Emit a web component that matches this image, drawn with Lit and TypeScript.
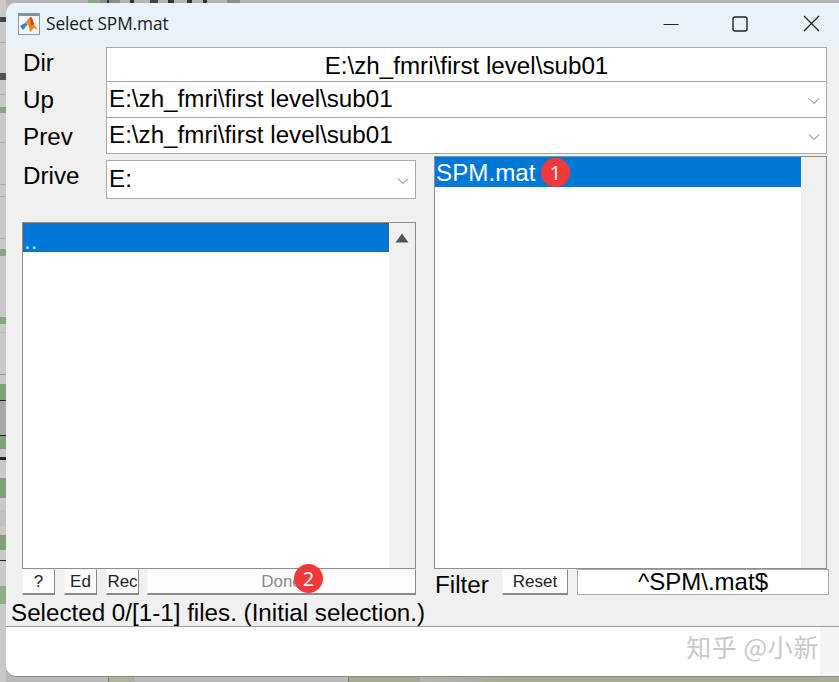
import { LitElement, html, css } from "lit";
import { customElement } from "lit/decorators.js";

const PATH = "E:\\zh_fmri\\first level\\sub01";
const chevron = html`<svg class="chev" width="12" height="8" viewBox="0 0 12 8"><path d="M1 1.5 L6 6.5 L11 1.5" fill="none" stroke="#6a6a6a" stroke-width="1"/></svg>`;
const marks = [
  { t: 17, h: 5, c: "#444" }, { t: 42, h: 1, c: "#aaa" }, { t: 73, h: 7, c: "#555" }, { t: 94, h: 1, c: "#aaa" },
  { t: 107, h: 6, c: "#86a97f" }, { t: 142, h: 1, c: "#aaa" }, { t: 184, h: 1, c: "#aaa" }, { t: 196, h: 1, c: "#aaa" },
  { t: 238, h: 1, c: "#aaa" }, { t: 249, h: 7, c: "#86a97f" }, { t: 317, h: 7, c: "#86a97f" }, { t: 332, h: 1, c: "#bbb" },
  { t: 374, h: 1, c: "#999" }, { t: 384, h: 16, c: "#7fa279" }, { t: 400, h: 35, c: "#a8a8a8" }, { t: 400, h: 1, c: "#222" },
  { t: 435, h: 1, c: "#222" }, { t: 436, h: 13, c: "#7fa279" }, { t: 457, h: 3, c: "#222" }, { t: 478, h: 20, c: "#7fa279" },
  { t: 510, h: 16, c: "#c0c0c0" }, { t: 535, h: 15, c: "#7fa279" }, { t: 560, h: 1, c: "#222" }, { t: 586, h: 18, c: "#8fae88" },
];
const topMarks = [
  { l: 88, w: 32, c: "#8c8c8c" }, { l: 88, w: 12, c: "#86a97f" }, { l: 107, w: 2, c: "#333" }, { l: 130, w: 4, c: "#333" },
  { l: 150, w: 8, c: "#444" }, { l: 168, w: 6, c: "#333" }, { l: 187, w: 5, c: "#333" }, { l: 203, w: 4, c: "#333" }, { l: 227, w: 13, c: "#8c8c8c" },
];
const bottomTicks = [{ l: 108, w: 27, c: "#b0b0a0" }, { l: 348, w: 72, c: "#a8a898" }];

@customElement("app-root")
export class AppRoot extends LitElement {
  static styles = css`
    :host {
      display: block; position: relative; width: 839px; height: 682px; overflow: hidden;
      background: linear-gradient(90deg, #b9b9b9 0 45%, #a9a999 60%, #a9a999 100%);
      font-family: "Liberation Sans", Arial, sans-serif; color: #000;
    }
    .top { position: absolute; left: 0; right: 0; top: 0; height: 3px; background: #b4b4b4; }
    .tmark { position: absolute; top: 0; height: 3px; }
    .btick { position: absolute; bottom: 0; height: 6px; border-left: 1px solid #777; box-sizing: border-box; }
    .strip { position: absolute; left: 0; top: 0; width: 6px; height: 682px; background: #c9c9c9; }
    .mark { position: absolute; left: 0; width: 6px; }
    .window {
      position: absolute; left: 6px; top: 3px; width: 833px; height: 673px; background: #f0f0f0;
      border-radius: 10px 0 0 10px; overflow: hidden; display: flex; flex-direction: column;
      box-shadow: 0 1px 0 #8c8c84;
    }
    .title { height: 43px; flex: none; background: #e9f1f9; display: flex; align-items: center; padding-left: 12px; box-sizing: border-box; padding-bottom: 2px; }
    .title .name { font: 17.3px "Open Sans", "Noto Sans", sans-serif; color: #1a1a1a; margin-left: 6px; letter-spacing: -0.1px; }
    .ctrls { margin-left: auto; display: flex; align-items: center; }
    .ctrls svg { display: block; }
    .ctrls .min { margin-right: 53px; }
    .ctrls .max { margin-right: 55px; }
    .ctrls .cls { margin-right: 19px; }
    .body { height: 580px; flex: none; padding: 1px 12px 0 16px; box-sizing: border-box; display: flex; flex-direction: column; }
    .row { display: flex; align-items: stretch; flex: none; }
    .lab { font-size: 24.2px; line-height: 28px; width: 84px; flex: none; padding-left: 1px; box-sizing: border-box; }
    .field {
      flex: 1; background: #fff; border: 1px solid #a9a9a9; box-sizing: border-box; font-size: 24.2px;
      display: flex; align-items: center; padding: 0 0 1px 2px; position: relative; white-space: nowrap;
    }
    .chev { position: absolute; right: 6px; top: 50%; margin-top: -3px; }
    .r-dir { height: 34px; }
    .r-dir .field { justify-content: center; padding: 2px 0 0 0; border-bottom: none; }
    .r-dir .lab { padding-top: 2px; }
    .r-up { height: 36px; }
    .r-up .field { border-bottom: none; }
    .r-up .lab { padding-top: 5px; }
    .r-prev { height: 37px; }
    .r-prev .lab { padding-top: 6px; }
    .cols { display: grid; grid-template-columns: 394px 393px; column-gap: 18px; margin-top: 2px; height: 439px; flex: none; }
    .left, .right { position: relative; display: flex; flex-direction: column; min-width: 0; }
    .drive { height: 39px; margin-top: 4px; display: flex; flex: none; }
    .drive .lab { padding-top: 2px; }
    .drive .field { padding: 0 0 1px 2px; }
    .list { position: relative; background: #fff; border: 1px solid #8e8e8e; box-sizing: border-box; display: flex; flex: none; }
    .left .list { height: 347px; margin-top: 23px; }
    .right .list { height: 413px; }
    .items { flex: 1; min-width: 0; }
    .sel { background: #0078d7; color: #fff; font-size: 24.2px; display: flex; align-items: center; padding-left: 1px; box-sizing: border-box; }
    .left .sel { height: 29px; color: #9ee3ff; outline: 1px dotted #555; outline-offset: -1px; align-items: flex-end; line-height: 22px; }
    .right .sel { height: 30px; padding-top: 1px; }
    .track { width: 26px; flex: none; background: #f0f0f0; display: flex; justify-content: center; }
    .right .track { width: 25px; }
    .track svg { margin-top: 10px; }
    .btnrow { display: flex; height: 26px; align-items: stretch; flex: none; }
    .btn {
      box-sizing: border-box; background: #fdfdfd; font-size: 17px; display: flex; align-items: center; justify-content: center; padding-top: 1px;
      border-right: 1px solid #8a8a8a; border-bottom: 2px solid #8a8a8a; border-top: 1px solid #f4f4f4; border-left: 1px solid #f4f4f4; color: #222; white-space: nowrap;
    }
    .b1 { width: 33px; margin-right: 9px; }
    .b2 { width: 33px; margin-right: 9px; }
    .b3 { width: 33px; margin-right: 8px; }
    .b4 { flex: 1; color: #8a8a8a; }
    .filter { font-size: 24.2px; width: 68px; padding-left: 1px; box-sizing: border-box; line-height: 32px; }
    .reset { width: 66px; margin-right: 9px; }
    .fin { flex: none; width: 252px; background: #fff; border: 1px solid #a9a9a9; box-sizing: border-box; font-size: 24px; display: flex; align-items: center; justify-content: center; margin-right: -2px; }
    .badge {
      position: absolute; width: 29px; height: 29px; border-radius: 50%; background: #ef3a3c; color: #fff; font: 20px "Open Sans", sans-serif;
      display: flex; align-items: center; justify-content: center; z-index: 2;
    }
    .status { font-size: 24.2px; line-height: 30px; margin-left: -11px; padding-top: 3px; height: 31px; box-sizing: border-box; flex: none; white-space: nowrap; }
    .foot { flex: 1; background: #fff; display: flex; justify-content: flex-end; align-items: center; border-top: 1px solid #9a9a9a; }
    .mark-w { font: 25px "Noto Sans CJK SC", sans-serif; color: #c9c9c9; padding: 0 1px 12px 0; letter-spacing: 0.6px; white-space: nowrap; }
    .footend { width: 19px; align-self: stretch; background: #f4f4f4; flex: none; }
  `;

  render() {
    return html`
      <div class="top">${topMarks.map((m) => html`<div class="tmark" style="left:${m.l}px;width:${m.w}px;background:${m.c}"></div>`)}</div>
      ${bottomTicks.map((m) => html`<div class="btick" style="left:${m.l}px;width:${m.w}px;background:${m.c}"></div>`)}
      <div class="strip">${marks.map((m) => html`<div class="mark" style="top:${m.t}px;height:${m.h}px;background:${m.c}"></div>`)}</div>
      <div class="window">
        <div class="title">
          <svg width="22" height="22" viewBox="0 0 22 22">
            <rect x="0.5" y="0.5" width="21" height="21" fill="#f4f6f8" stroke="#8d97a3"/>
            <rect x="1" y="1" width="20" height="2" fill="#7f8fa3"/>
            <path d="M2 13 L7 10 L10 11 L5 17 Z" fill="#3f7fb8"/>
            <path d="M7 10 L12 4 L14 5 L16 11 L20 17 L16 15 L12 19 L10 11 Z" fill="#ee8a26"/>
            <path d="M12 4 L14 5 L16 11 L13 13 Z" fill="#c9481a"/>
          </svg>
          <span class="name">Select SPM.mat</span>
          <div class="ctrls">
            <svg class="min" width="16" height="16" viewBox="0 0 16 16"><path d="M0.5 8.5 H15.5" stroke="#222" stroke-width="1.2"/></svg>
            <svg class="max" width="16" height="16" viewBox="0 0 16 16"><rect x="1" y="1" width="14" height="14" rx="2" fill="none" stroke="#222" stroke-width="1.4"/></svg>
            <svg class="cls" width="17" height="17" viewBox="0 0 17 17"><path d="M1 1 L16 16 M16 1 L1 16" stroke="#222" stroke-width="1.3"/></svg>
          </div>
        </div>
        <div class="body">
          <div class="row r-dir"><div class="lab">Dir</div><div class="field">${PATH}</div></div>
          <div class="row r-up"><div class="lab">Up</div><div class="field">${PATH}${chevron}</div></div>
          <div class="row r-prev"><div class="lab">Prev</div><div class="field">${PATH}${chevron}</div></div>
          <div class="cols">
            <div class="left">
              <div class="drive"><div class="lab">Drive</div><div class="field">E:${chevron}</div></div>
              <div class="list">
                <div class="items"><div class="sel">..</div></div>
                <div class="track"><svg width="14" height="10" viewBox="0 0 14 10"><path d="M7 0.5 L13.5 9.5 H0.5 Z" fill="#555"/></svg></div>
              </div>
              <div class="btnrow">
                <div class="btn b1">?</div><div class="btn b2">Ed</div><div class="btn b3">Rec</div>
                <div class="btn b4">Done</div>
              </div>
              <div class="badge" style="left:272px;top:408px">2</div>
            </div>
            <div class="right">
              <div class="list">
                <div class="items"><div class="sel">SPM.mat</div></div>
                <div class="track"></div>
              </div>
              <div class="btnrow">
                <div class="filter">Filter</div>
                <div class="btn reset">Reset</div>
                <div class="fin">^SPM\\.mat$</div>
              </div>
              <div class="badge" style="left:107px;top:2px">1</div>
            </div>
          </div>
          <div class="status">Selected 0/[1-1] files. (Initial selection.)</div>
        </div>
        <div class="foot"><div class="mark-w">知乎 @小新</div><div class="footend"></div></div>
      </div>
    `;
  }
}
